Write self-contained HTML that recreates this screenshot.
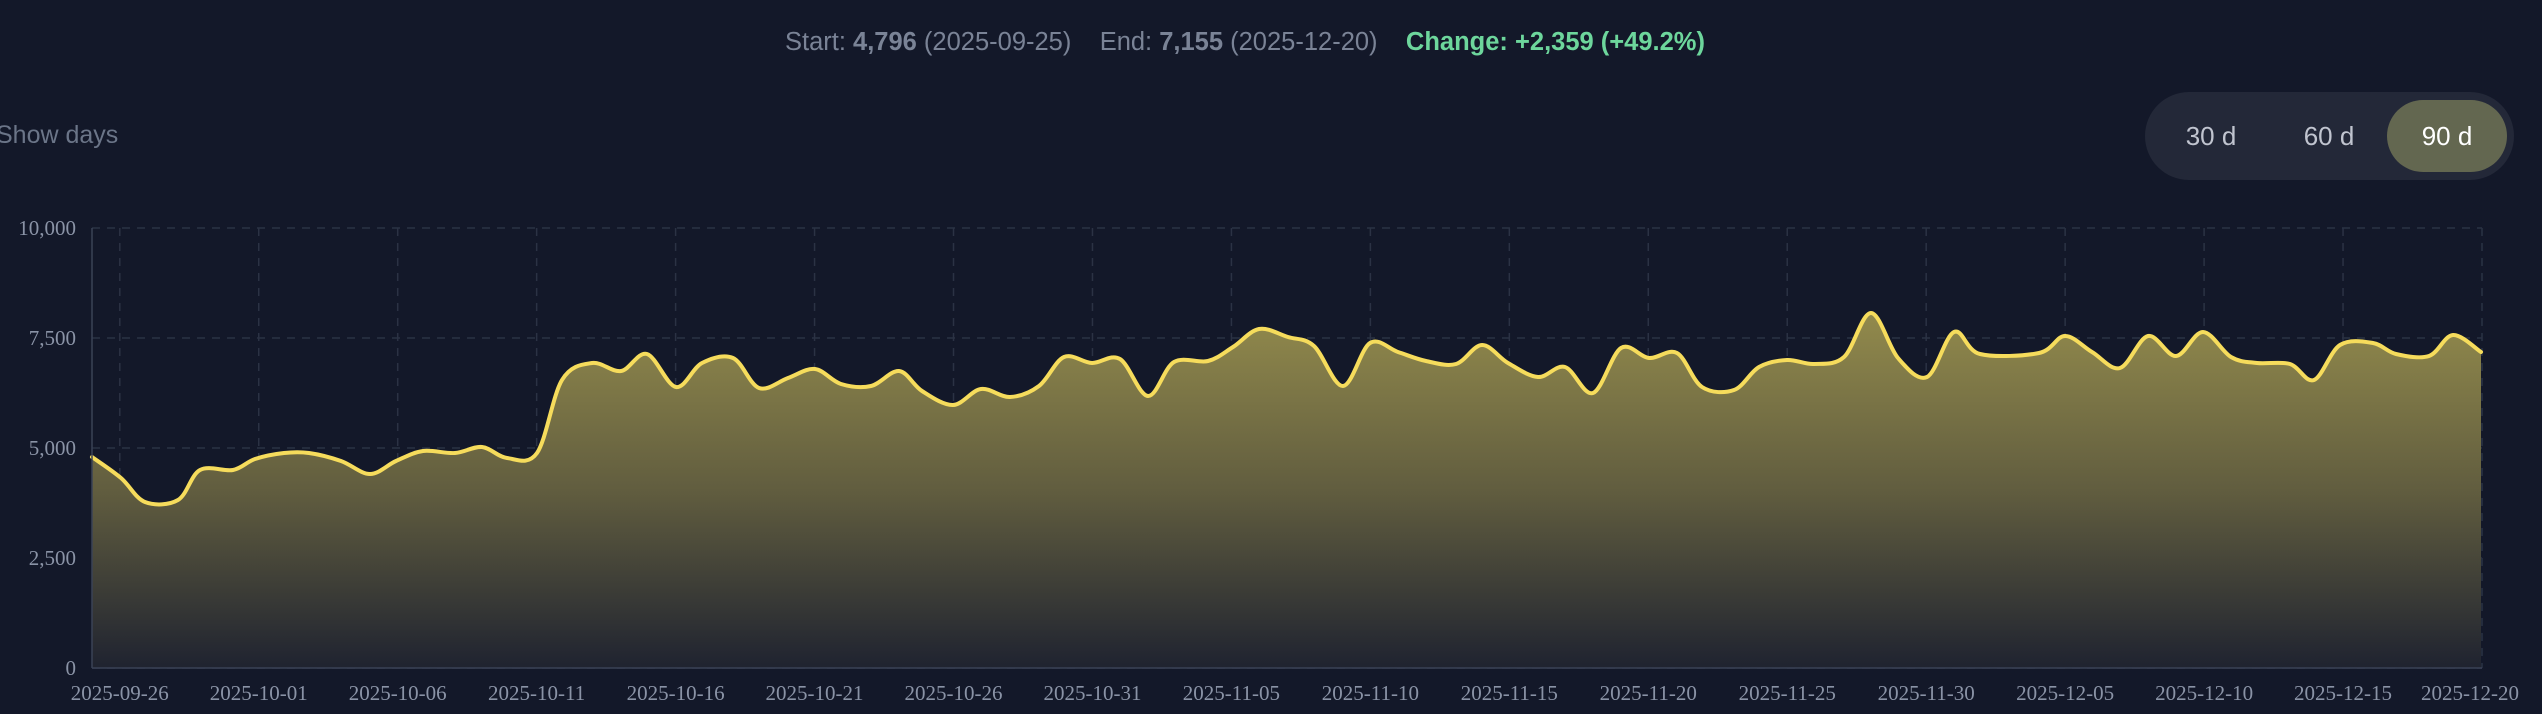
<!DOCTYPE html>
<html><head><meta charset="utf-8"><style>
html,body{margin:0;padding:0;background:#131829;width:2542px;height:714px;overflow:hidden;font-family:"Liberation Sans",sans-serif}
.hdr{position:absolute;left:785px;top:28px;font-size:25.5px;color:#7a8396;white-space:nowrap}
.hdr b{font-weight:bold}
.hdr .chg{color:#6dd69c;font-weight:bold}
.sd{position:absolute;left:-4px;top:121px;font-size:25px;color:#6b7588}
.tg{position:absolute;left:2145px;top:92px;width:369px;height:88px;border-radius:44px;background:#232838}
.tg span{position:absolute;top:0;height:88px;line-height:88px;font-size:26px;color:#c0c4cf;transform:translateX(-50%)}
.tg .act{position:absolute;left:242px;top:8px;width:120px;height:72px;border-radius:36px;background:#636750}
</style></head><body>
<div class="hdr">Start: <b>4,796</b> (2025-09-25)&nbsp;&nbsp;&nbsp;&nbsp;End: <b>7,155</b> (2025-12-20)&nbsp;&nbsp;&nbsp;&nbsp;<span class="chg">Change: +2,359 (+49.2%)</span></div>
<div class="sd">Show days</div>
<div class="tg"><div class="act"></div><span style="left:66px">30 d</span><span style="left:184px">60 d</span><span style="left:302px;color:#fff">90 d</span></div>
<svg id="c" width="2542" height="714" style="position:absolute;left:0;top:0" xmlns="http://www.w3.org/2000/svg">
<defs><linearGradient id="g" x1="0" y1="0" x2="0" y2="1" gradientUnits="objectBoundingBox">
<stop offset="0" stop-color="#928a4c"/><stop offset="0.5" stop-color="#615d3f"/><stop offset="1" stop-color="#1f2330"/></linearGradient></defs>
<g id="grid" stroke="#2b3244" stroke-width="1.5" stroke-dasharray="8,7" fill="none"></g>
<path id="area" fill="url(#g)"/>
<path id="line" fill="none" stroke="#f6dc5c" stroke-width="4" stroke-linejoin="round" stroke-linecap="round"/>
<line x1="92" y1="228" x2="92" y2="668" stroke="#3a4256" stroke-width="1.5"/>
<line x1="92" y1="668" x2="2482" y2="668" stroke="#3a4256" stroke-width="1.5"/>
<g id="lbl" font-family="Liberation Serif, serif" font-size="21" fill="#8a93a6"></g>
</svg>
<script>
var ns="http://www.w3.org/2000/svg";
var pts=[[92,457],[121,478],[145,502],[178,500],[200,470],[233,470],[255,459],[284,453],[309,453],[341,461],[370,474],[396,461],[423,451],[455,453],[482,447],[507,458],[537,453],[562,380],[592,363],[621,371],[647,354],[676,387],[702,363],[733,358],[759,388],[788,378],[815,369],[841,384],[871,386],[899,371],[922,391],[953,405],[981,389],[1010,397],[1039,386],[1064,357],[1092,363],[1120,359],[1148,396],[1174,362],[1208,361],[1233,347],[1259,329],[1288,337],[1314,346],[1343,386],[1370,343],[1398,352],[1426,361],[1456,364],[1482,345],[1508,363],[1538,377],[1565,367],[1593,393],[1621,348],[1649,358],[1677,353],[1702,387],[1734,390],[1759,367],[1787,360],[1814,364],[1844,357],[1871,313],[1898,358],[1927,377],[1954,332],[1980,354],[2039,353],[2065,336],[2092,352],[2120,368],[2148,336],[2176,356],[2203,332],[2231,357],[2257,363],[2290,364],[2314,380],[2340,345],[2373,343],[2396,354],[2429,356],[2453,335],[2481,352]];
var d="M"+pts[0][0]+","+pts[0][1];
for(var i=0;i<pts.length-1;i++){var p0=pts[i-1]||pts[i],p1=pts[i],p2=pts[i+1],p3=pts[i+2]||p2;
var c1x=p1[0]+(p2[0]-p0[0])/6,c1y=p1[1]+(p2[1]-p0[1])/6,c2x=p2[0]-(p3[0]-p1[0])/6,c2y=p2[1]-(p3[1]-p1[1])/6;
d+=" C"+c1x.toFixed(1)+","+c1y.toFixed(1)+" "+c2x.toFixed(1)+","+c2y.toFixed(1)+" "+p2[0]+","+p2[1];}
document.getElementById("line").setAttribute("d",d);
document.getElementById("area").setAttribute("d",d+" L2481,668 L92,668 Z");
var g=document.getElementById("grid"),L=document.getElementById("lbl");
function ln(x1,y1,x2,y2){var l=document.createElementNS(ns,"line");l.setAttribute("x1",x1);l.setAttribute("y1",y1);l.setAttribute("x2",x2);l.setAttribute("y2",y2);g.appendChild(l);}
function tx(x,y,s,a){var t=document.createElementNS(ns,"text");t.setAttribute("x",x);t.setAttribute("y",y);t.setAttribute("text-anchor",a);t.textContent=s;L.appendChild(t);}
var yl=["0","2,500","5,000","7,500","10,000"];
for(var k=0;k<5;k++){var y=668-k*110;ln(92,y,2482,y);tx(76,y+7,yl[k],"end");}
var dates=["2025-09-26","2025-10-01","2025-10-06","2025-10-11","2025-10-16","2025-10-21","2025-10-26","2025-10-31","2025-11-05","2025-11-10","2025-11-15","2025-11-20","2025-11-25","2025-11-30","2025-12-05","2025-12-10","2025-12-15"];
var pd=(2482-92)/86;
for(var k=0;k<dates.length;k++){var x=92+pd*(1+5*k);ln(x,228,x,668);tx(x,700,dates[k],"middle");}
ln(2482,228,2482,668);tx(2470,700,"2025-12-20","middle");
</script>
</body></html>
